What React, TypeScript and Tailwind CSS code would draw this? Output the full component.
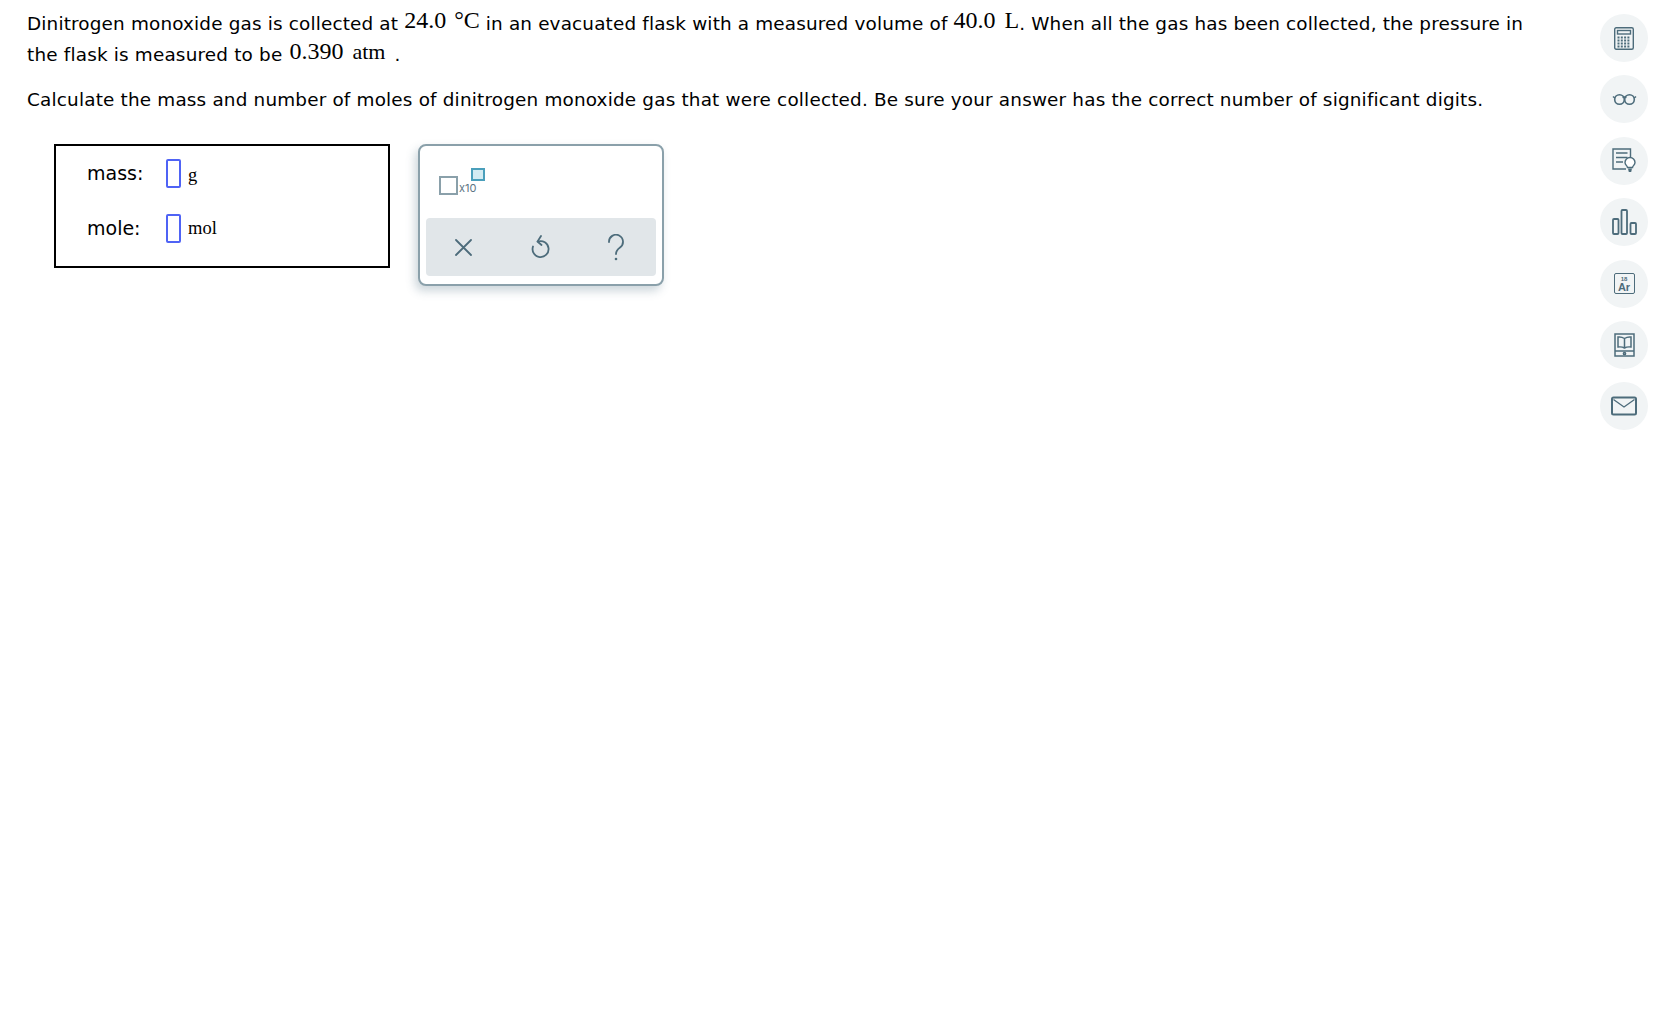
import React from "react";

function Num({ children }: { children: React.ReactNode }) {
  return <span className="font-['Liberation_Serif',serif] text-[24px] tracking-normal leading-none relative -top-[2px]">{children}</span>;
}

function Circle({ children }: { children: React.ReactNode }) {
  return (
    <div className="w-12 h-12 rounded-full bg-[#f1f4f5] flex items-center justify-center text-[#4d6c7b]">
      {children}
    </div>
  );
}

function Calc() {
  return (
    <svg width="20" height="23" viewBox="0 0 20 23" fill="none" stroke="currentColor" strokeWidth="1.4">
      <rect x="0.7" y="0.7" width="18.6" height="21.6" rx="1.5" />
      <rect x="3.5" y="3.5" width="13" height="3.5" />
      <g fill="currentColor" stroke="none">
        {[9.5, 12.5, 15.5, 18.5].map((y) =>
          [3.5, 6.8, 10.1, 13.4].map((x) => <rect key={`${x}-${y}`} x={x} y={y} width="2" height="2" />)
        )}
      </g>
    </svg>
  );
}
function Glasses() {
  return (
    <svg width="25" height="14" viewBox="0 0 25 14" fill="none" stroke="currentColor" strokeWidth="1.6">
      <circle cx="7.5" cy="7.5" r="4.8" />
      <circle cx="17.5" cy="7.5" r="4.8" />
      <path d="M10.5 5.5q2-1 4 0M2.8 6L1 4.500M22.2 6L24 4.500" />
    </svg>
  );
}
function Report() {
  return (
    <svg width="24" height="25" viewBox="0 0 24 25" fill="none" stroke="currentColor" strokeWidth="1.4">
      <path d="M14 21H1V1h17.500v9" />
      <path d="M4 5h11.500M4 9.500h11.500M4 14h7" />
      <path d="M15.500 19.500c0-1.500-2.500-2.500-2.500-5a5 5 0 0 1 10 0c0 2.500-2.500 3.500-2.500 5z" fill="white" />
      <path d="M16 20.500h4l-.8 3.500h-2.400z" fill="currentColor" stroke="none" />
    </svg>
  );
}
function Bars() {
  return (
    <svg width="25" height="26" viewBox="0 0 25 26" fill="none" stroke="currentColor" strokeWidth="1.8">
      <rect x="1" y="10" width="5.500" height="15" rx="1" />
      <rect x="9.500" y="1" width="5.500" height="24" rx="1" />
      <rect x="18.500" y="14" width="5.500" height="11" rx="1" />
    </svg>
  );
}
function Argon() {
  return (
    <div className="w-[21px] h-[21px] border-[1.5px] border-[#4d6c7b] rounded-[2px] flex flex-col items-center justify-center font-['Liberation_Sans',sans-serif] font-bold">
      <span className="text-[6px] leading-[6px]">18</span>
      <span className="text-[11px] leading-[10px]">Ar</span>
    </div>
  );
}
function Book() {
  return (
    <svg width="21" height="24" viewBox="0 0 21 24" fill="none" stroke="currentColor" strokeWidth="1.5">
      <rect x="1" y="1" width="19" height="22" />
      <path d="M1 18h19" />
      <path d="M10.500 5.500V15M10.500 5.500Q7.500 3.500 4 4v10q4-.5 6.500 1q2.500-1.500 6.500-1V4Q13.500 3.500 10.500 5.500z" />
      <circle cx="10.500" cy="20.500" r="1.100" />
    </svg>
  );
}
function Mail() {
  return (
    <svg width="26" height="20" viewBox="0 0 26 20" fill="none" stroke="currentColor" strokeWidth="2">
      <rect x="1" y="1.500" width="24" height="17" rx="1.500" />
      <path d="M2.500 3.500L13 11l10.500-7.500" strokeWidth="1.300" />
    </svg>
  );
}

function Field({ label, unit, unitClass }: { label: string; unit: string; unitClass: string }) {
  return (
    <div className="flex items-center h-[28px]">
      <span className="w-[79px] text-[19px] leading-7">{label}</span>
      <span className="w-[15px] h-[29px] border-2 border-[#4f63f5] rounded-[2px] bg-white" />
      <span className={`ml-[7px] font-['Liberation_Serif',serif] text-[18.5px] leading-7 relative ${unitClass}`}>{unit}</span>
    </div>
  );
}

export default function App() {
  return (
    <div className="w-[1664px] h-[1012px] bg-white text-black font-['DejaVu_Sans','Liberation_Sans',sans-serif] flex">
      <div className="w-[1560px] shrink-0 pl-[27px] pt-[8px]">
        <div className="w-[1525px] text-[18.4px] tracking-[0.18px]">
          <p className="whitespace-nowrap leading-[31px] tracking-[0.16px]">
            Dinitrogen monoxide gas is collected at <Num>24.0<span className="ml-[8px]">°C</span></Num> in an evacuated flask with a measured volume of <Num>40.0<span className="ml-[9px]">L</span></Num>. When all the gas has been collected, the pressure in
          </p>
          <p className="whitespace-nowrap leading-[31px]">
            the flask is measured to be <span className="ml-[1px]"><Num>0.390<span className="ml-[9px] text-[22px]">atm</span></Num></span>
            <span className="ml-[9px]">.</span>
          </p>
          <p className="mt-[14px] leading-[31px] whitespace-nowrap">
            Calculate the mass and number of moles of dinitrogen monoxide gas that were collected. Be sure your answer has the correct number of significant digits.
          </p>
        </div>

        <div className="flex items-start mt-[29px] ml-[27px]">
          <div className="w-[336px] h-[124px] border-2 border-black pl-[31px] pt-[13px] flex flex-col gap-[27px]">
            <Field label="mass:" unit="g" unitClass="top-[2px]" />
            <Field label="mole:" unit="mol" unitClass="top-0" />
          </div>

          <div className="ml-[28px] w-[246px] h-[142px] border-2 border-[#8aa0aa] rounded-[8px] bg-white shadow-[-3px_5px_10px_rgba(90,120,135,0.3)] px-[6px] flex flex-col">
            <div className="h-[72px] relative shrink-0">
              <span className="absolute left-[13px] top-[30px] w-[19px] h-[19px] border-2 border-[#8aa0aa]" />
              <span className="absolute left-[33px] top-[34px] text-[11px] leading-4 text-[#5d7583] font-['Inter',sans-serif]">x10</span>
              <span className="absolute left-[45px] top-[22px] w-[14px] h-[13px] border-2 border-[#4a9fbb] bg-[#d3ebf2]" />
            </div>
            <div className="h-[58px] rounded-[4px] bg-[#e1e6e9] flex items-center pl-[27px] text-[#4d6c7b]">
              <svg width="20" height="20" viewBox="0 0 20 20" fill="none" stroke="currentColor" strokeWidth="1.800" strokeLinecap="round">
                <path d="M3 3l15 15M18 3L3 18" />
              </svg>
              <svg className="ml-[58px]" width="20" height="25" viewBox="0 0 20 25" fill="none" stroke="currentColor" strokeWidth="1.800" strokeLinecap="round">
                <path d="M7 6.500a8 8 0 1 1-5 5" />
                <path d="M10 1L6.500 6.500l4 3.500" />
              </svg>
              <svg className="ml-[56px]" width="18" height="27" viewBox="0 0 18 27" fill="none" stroke="currentColor" strokeWidth="1.800" strokeLinecap="round">
                <path d="M2 8a7 7 0 1 1 11 5.500c-2.500 1.800-4 3-4 6.500" />
                <circle cx="9" cy="25" r="1.300" fill="currentColor" stroke="none" />
              </svg>
            </div>
          </div>
        </div>
      </div>

      <div className="ml-[40px] w-12 pt-[14px] flex flex-col gap-[13.4px]">
        <Circle><Calc /></Circle>
        <Circle><Glasses /></Circle>
        <Circle><Report /></Circle>
        <Circle><Bars /></Circle>
        <Circle><Argon /></Circle>
        <Circle><Book /></Circle>
        <Circle><Mail /></Circle>
      </div>
    </div>
  );
}
